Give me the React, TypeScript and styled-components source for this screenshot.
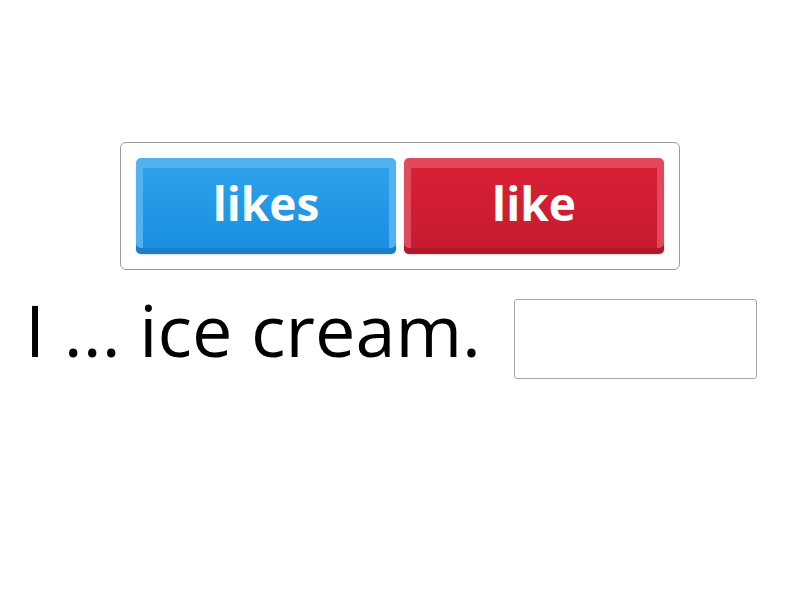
import React from "react";
import styled, { createGlobalStyle } from "styled-components";

const Global = createGlobalStyle`
  html, body { margin: 0; padding: 0; background: #ffffff; }
  body { font-family: "Open Sans", "Liberation Sans", sans-serif; }
`;

const Page = styled.div`
  width: 800px;
  height: 600px;
  box-sizing: border-box;
  padding-top: 142px;
  display: flex;
  flex-direction: column;
  align-items: center;
`;

const Frame = styled.div`
  width: 560px;
  box-sizing: border-box;
  border: 1px solid #9c9c9c;
  border-radius: 6px;
  padding: 15px;
  display: flex;
  gap: 8px;
`;

type Tone = "blue" | "red";

const tones: Record<Tone, { bevel: string; top: string; bottom: string; base: string }> = {
  blue: { bevel: "#52b2ef", top: "#2da1ea", bottom: "#1a8fe1", base: "#1680cc" },
  red: { bevel: "#e04a5c", top: "#d91f36", bottom: "#c71b30", base: "#b3182a" },
};

const Tile = styled.button<{ $tone: Tone }>`
  width: 260px;
  height: 96px;
  box-sizing: border-box;
  border: none;
  border-radius: 5px;
  padding: 10px 7px 6px;
  margin: 0;
  display: flex;
  cursor: pointer;
  background: ${(p) => tones[p.$tone].bevel};
  box-shadow: inset 0 -6px 0 ${(p) => tones[p.$tone].base}, 0 1px 2px rgba(0, 0, 0, 0.15);
`;

const Face = styled.span<{ $tone: Tone }>`
  flex: 1;
  display: flex;
  align-items: center;
  justify-content: center;
  padding-bottom: 10px;
  background: linear-gradient(
    to bottom,
    ${(p) => tones[p.$tone].top},
    ${(p) => tones[p.$tone].bottom}
  );
  color: #ffffff;
  font-family: "Open Sans", "Liberation Sans", sans-serif;
  font-weight: 700;
  font-size: 46px;
  line-height: 1;
`;

const Row = styled.div`
  align-self: flex-start;
  margin-top: 19px;
  padding-left: 25px;
  display: flex;
  align-items: center;
  gap: 33px;
`;

const Prompt = styled.div`
  font-family: "Open Sans", "Liberation Sans", sans-serif;
  font-size: 72px;
  line-height: 80px;
  color: #000000;
  margin-bottom: 20px;
  white-space: nowrap;
`;

const Answer = styled.div`
  width: 243px;
  height: 80px;
  box-sizing: border-box;
  border: 1px solid #a8a8a8;
  border-radius: 3px;
  background: #ffffff;
`;

export default function App() {
  return (
    <>
      <Global />
      <Page>
        <Frame>
          <Tile $tone="blue">
            <Face $tone="blue">likes</Face>
          </Tile>
          <Tile $tone="red">
            <Face $tone="red">like</Face>
          </Tile>
        </Frame>
        <Row>
          <Prompt>I ... ice cream.</Prompt>
          <Answer />
        </Row>
      </Page>
    </>
  );
}
